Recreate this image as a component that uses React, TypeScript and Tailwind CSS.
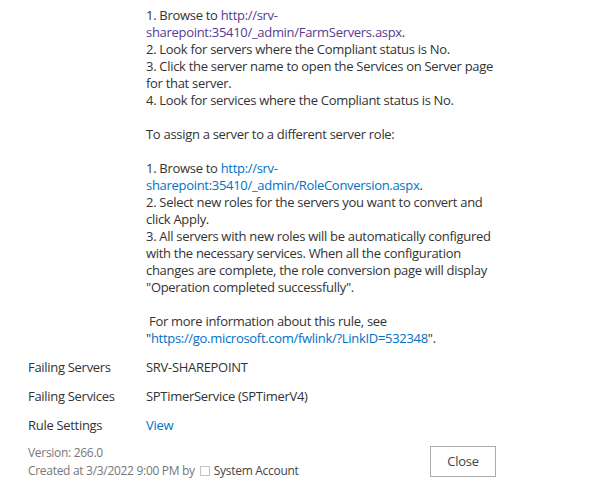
const visited = "text-[#553b95]";
const link = "text-[#0072c6]";

const Line = ({ children }: { children?: React.ReactNode }) => (
  <div className="h-[17px] whitespace-pre">{children}</div>
);

export default function App() {
  return (
    <div
      className="w-[594px] h-[483px] bg-white text-[#333] text-[13px] leading-[17px] tracking-[-0.3px] overflow-hidden"
      style={{ fontFamily: '"Open Sans", "Noto Sans", sans-serif' }}
    >
      <div className="pl-[28px] pt-[7px]">
        <div className="ml-[118px]">
          <Line>
            1. Browse to <span className={visited}>http://srv-</span>
          </Line>
          <Line>
            <span className={visited}>sharepoint:35410/_admin/FarmServers.aspx</span>.
          </Line>
          <Line>2. Look for servers where the Compliant status is No.</Line>
          <Line>3. Click the server name to open the Services on Server page</Line>
          <Line>for that server.</Line>
          <Line>4. Look for services where the Compliant status is No.</Line>
          <Line />
          <Line>To assign a server to a different server role:</Line>
          <Line />
          <Line>
            1. Browse to <span className={link}>http://srv-</span>
          </Line>
          <Line>
            <span className={link}>sharepoint:35410/_admin/RoleConversion.aspx</span>.
          </Line>
          <Line>2. Select new roles for the servers you want to convert and</Line>
          <Line>click Apply.</Line>
          <Line>3. All servers with new roles will be automatically configured</Line>
          <Line>with the necessary services. When all the configuration</Line>
          <Line>changes are complete, the role conversion page will display</Line>
          <Line>"Operation completed successfully".</Line>
          <Line />
          <Line> For more information about this rule, see</Line>
          <Line>
            "<span className={link}>https://go.microsoft.com/fwlink/?LinkID=532348</span>".
          </Line>
        </div>

        <div className="mt-[6px] grid grid-cols-[118px_1fr]">
          <div className="h-[29px] flex items-center">Failing Servers</div>
          <div className="h-[29px] flex items-center">SRV-SHAREPOINT</div>
          <div className="h-[29px] flex items-center">Failing Services</div>
          <div className="h-[29px] flex items-center">SPTimerService (SPTimerV4)</div>
          <div className="h-[29px] flex items-center">Rule Settings</div>
          <div className={`h-[29px] flex items-center ${link}`}>View</div>
        </div>

        <div className="flex items-start justify-between pr-[98px] mt-[4px]">
          <div className="text-[12px] leading-[18px] text-[#777]">
            <div>Version: 266.0</div>
            <div className="flex items-center whitespace-pre">
              Created at 3/3/2022 9:00 PM by
              <span className="inline-block w-[10px] h-[10px] border border-[#c4c4c4] ml-[5px] mr-[4px]" />
              <span className="text-[#444]">System Account</span>
            </div>
          </div>
          <button className="mt-[2px] w-[66px] h-[31px] border border-[#ababab] bg-white text-[#444] text-[13px]">
            Close
          </button>
        </div>
      </div>
    </div>
  );
}
